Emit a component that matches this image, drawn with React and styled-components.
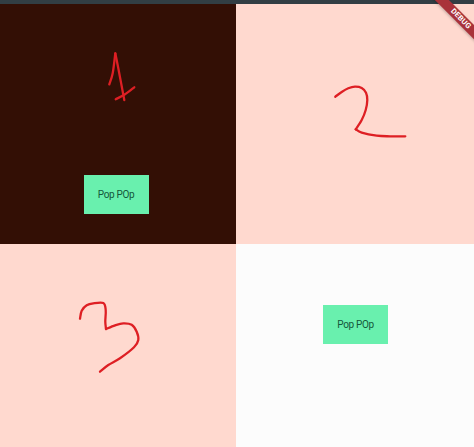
import styled, { createGlobalStyle } from 'styled-components';

const GlobalStyle = createGlobalStyle`
  html, body {
    margin: 0;
    padding: 0;
    background: #fcfcfc;
  }
`;

const Screen = styled.div`
  position: relative;
  width: 474px;
  height: 447px;
  overflow: hidden;
  display: flex;
  flex-direction: column;
  font-family: Roboto, "Liberation Sans", sans-serif;
`;

const TopBar = styled.div`
  flex: none;
  height: 4px;
  background: #323e44;
`;

const Grid = styled.div`
  flex: 1;
  display: grid;
  grid-template-columns: 236px 238px;
  grid-template-rows: 240px 203px;
`;

const Cell = styled.div`
  display: flex;
  flex-direction: column;
  align-items: center;
  background: ${(p) => p.$bg};
  padding-top: ${(p) => p.$top || 0}px;
`;

const Scribble = styled.svg`
  display: block;
  flex: none;
  fill: none;
  stroke: #de1f24;
  stroke-width: 2.3;
  stroke-linecap: round;
  stroke-linejoin: round;
`;

const PopButton = styled.button`
  flex: none;
  width: 65px;
  height: 39px;
  padding: 0;
  border: 0;
  margin-left: ${(p) => p.$shift || 0}px;
  background: #69f0ae;
  color: #14573a;
  font: 400 10px Roboto, "Liberation Sans", sans-serif;
  letter-spacing: -0.35px;
  cursor: pointer;
`;

const DebugBanner = styled.div`
  position: absolute;
  top: 13.75px;
  right: -22px;
  width: 70px;
  height: 9.5px;
  transform: rotate(45deg);
  background: #a9323a;
  box-shadow: 0 1px 3px rgba(0, 0, 0, 0.25);
  color: #fff;
  font: 700 7.5px/9.5px Roboto, "Liberation Sans", sans-serif;
  letter-spacing: 0.2px;
  text-align: center;
`;

// catmull-rom through the sampled points of a hand drawn stroke
const smooth = (pts) => {
  let d = `M${pts[0][0]} ${pts[0][1]}`;
  for (let i = 0; i < pts.length - 1; i++) {
    const p0 = pts[i - 1] || pts[i];
    const p1 = pts[i];
    const p2 = pts[i + 1];
    const p3 = pts[i + 2] || p2;
    const c1x = p1[0] + (p2[0] - p0[0]) / 6;
    const c1y = p1[1] + (p2[1] - p0[1]) / 6;
    const c2x = p2[0] - (p3[0] - p1[0]) / 6;
    const c2y = p2[1] - (p3[1] - p1[1]) / 6;
    d += ` C${c1x} ${c1y} ${c2x} ${c2y} ${p2[0]} ${p2[1]}`;
  }
  return d;
};

const ONE = [
  [[109.3, 80.3], [112.7, 69.3], [115.3, 49.3]],
  [[115.3, 49.3], [118.3, 64.3], [124.3, 96]],
  [[115.7, 95.3], [125, 90.3], [134.3, 83.3]],
];

const TWO = [
  [[99.3, 92.7], [105.7, 88], [112.3, 84.3], [119, 82.7], [125.7, 84], [130, 88.7], [131.3, 96], [129.7, 106], [125.7, 116], [119.7, 125.3]],
  [[119.7, 125.3], [125.7, 128.7], [140.7, 131.7], [154, 132.3], [169.3, 132.3]],
];

const THREE = [
  [[80, 74.7], [81.7, 66.7], [86.7, 61.3], [93.3, 59.3], [103.3, 59], [105.7, 66], [105.3, 77.7], [106, 85]],
  [[106, 85], [115, 81.3], [123.3, 79.3], [131.7, 80.7], [136.7, 87.7], [138.3, 96], [134, 103.3], [120, 114.3], [108.3, 121], [100, 127.7]],
];

const Strokes = ({ strokes, width, height }) => (
  <Scribble width={width} height={height} viewBox={`0 0 ${width} ${height}`}>
    {strokes.map((pts, i) => (
      <path key={i} d={smooth(pts)} />
    ))}
  </Scribble>
);

export default function App() {
  return (
    <>
      <GlobalStyle />
      <Screen>
        <TopBar />
        <Grid>
          <Cell $bg="#330f05">
            <Strokes strokes={ONE} width={236} height={171} />
            <PopButton $shift={-4}>Pop POp</PopButton>
          </Cell>
          <Cell $bg="#ffd9cf">
            <Strokes strokes={TWO} width={238} height={240} />
          </Cell>
          <Cell $bg="#ffd9cf">
            <Strokes strokes={THREE} width={236} height={203} />
          </Cell>
          <Cell $bg="#fcfcfc" $top={61}>
            <PopButton $shift={1}>Pop POp</PopButton>
          </Cell>
        </Grid>
        <DebugBanner>DEBUG</DebugBanner>
      </Screen>
    </>
  );
}
